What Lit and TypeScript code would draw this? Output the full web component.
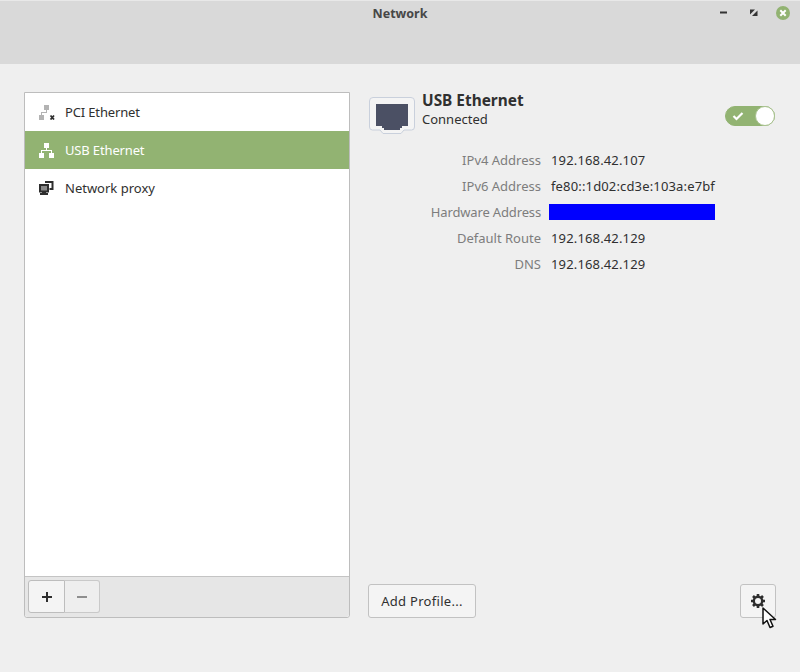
import { LitElement, html, css, svg } from "lit";
import { customElement } from "lit/decorators.js";

const netIcon = (main: string, x = false) => svg`<svg class="ico" width="16" height="16" viewBox="0 0 16 16">
  <rect x="5" y="1" width="5" height="5" fill="${main}"/>
  <rect x="7" y="6" width="1" height="3" fill="${main}"/>
  <rect x="2" y="8" width="${x ? 6 : 11}" height="1" fill="${main}"/>
  <rect x="2" y="8" width="1" height="3" fill="${main}"/>
  ${x ? "" : svg`<rect x="12" y="8" width="1" height="3" fill="${main}"/>`}
  <rect x="0" y="11" width="5" height="5" fill="${main}"/>
  ${x
    ? svg`<path d="M11.500 11.500l3.500 4M15 11.500l-3.500 4" stroke="#2e2e2e" stroke-width="1.800" fill="none"/>`
    : svg`<rect x="10" y="11" width="5" height="5" fill="${main}"/>`}
</svg>`;

@customElement("app-root")
export class AppRoot extends LitElement {
  static styles = css`
    :host { display: block; position: relative; width: 800px; height: 672px; overflow: hidden;
      background: #efefef; font-family: "Noto Sans", sans-serif; font-size: 13px; color: #303030; }
    .titlebar { height: 64px; box-sizing: border-box; background: #d9d9d9; border-top: 1px solid #e8e8e8;
      position: relative; display: flex; justify-content: center; padding-top: 5px; }
    .title { font-weight: 700; font-size: 12.500px; color: #474747; line-height: 16px; }
    .controls { position: absolute; left: 0; top: 0; width: 100%; height: 24px; }
    .controls svg { position: absolute; top: 0; }
    .c-min { left: 718px; }
    .c-max { left: 748px; }
    .c-close { left: 775px; }
    .body { height: 608px; box-sizing: border-box; padding: 28px 24px 54px; display: flex; gap: 18px; }
    .side { width: 326px; flex: none; box-sizing: border-box; border: 1px solid #bdbdbd; border-radius: 0 0 3px 3px;
      display: flex; flex-direction: column; background: #fff; }
    .list { flex: 1; }
    .row { height: 38px; display: flex; align-items: center; padding-left: 14px; gap: 10px; }
    .row.sel { background: #92b372; color: #fff; }
    .ico { flex: none; display: block; }
    .tight { letter-spacing: -0.15px; }
    .tools { height: 41px; box-sizing: border-box; border-top: 1px solid #c4c4c4; background: #e6e6e6;
      padding: 3px 3px 5px; display: flex; border-radius: 0 0 3px 3px; }
    .tb { height: 33px; box-sizing: border-box; border: 1px solid #c9c9c9; display: flex;
      align-items: center; justify-content: center; background: #f4f4f4; }
    .tb.a { width: 37px; border-radius: 3px 0 0 3px; border-color: #bdbdbd; }
    .tb.b { width: 35px; border-radius: 0 3px 3px 0; border-left: 0; background: #eeeeee; }
    .main { flex: 1; display: flex; flex-direction: column; min-width: 0; }
    .head { display: flex; height: 50px; align-items: flex-start; padding-left: 1px; }
    .hicon { margin-top: 5px; flex: none; }
    .htext { margin-left: 7px; }
    .h1 { font-weight: 700; font-size: 15.400px; line-height: 18px; color: #303030; }
    .h2 { font-size: 13px; line-height: 18px; }
    .switch { margin: 14px 1px 0 auto; width: 50px; height: 20px; box-sizing: border-box; border-radius: 10px;
      background: #92b372; border: 1px solid #92b372; position: relative; flex: none; display: flex; align-items: center; padding-left: 6px; }
    .knob { position: absolute; right: -1px; top: -1px; width: 20px; height: 20px; border-radius: 50%;
      background: #fff; box-sizing: border-box; border: 1px solid #a9c290; }
    .grid { display: grid; grid-template-columns: 173px auto; grid-auto-rows: 26px; align-items: center;
      column-gap: 10px; margin-top: 5px; justify-content: start; }
    .k { text-align: right; color: #7d7d7d; }
    .v { color: #303030; letter-spacing: 0.15px; }
    .redact { width: 166px; height: 16px; background: #0000ff; margin-left: -2px; }
    .foot { margin-top: auto; display: flex; justify-content: space-between; }
    .btn { height: 34px; box-sizing: border-box; border: 1px solid #c2c2c2; border-radius: 3px; background: #f4f4f4;
      display: flex; align-items: center; justify-content: center; color: #303030; font-family: inherit; font-size: 13px; padding: 0; }
    .add { width: 108px; letter-spacing: 0.3px; }
    .gear { width: 36px; }
    .cursor { position: absolute; left: 762px; top: 607px; }
  `;

  render() {
    return html`
      <div class="titlebar">
        <div class="title">Network</div>
        <div class="controls">
          <svg class="c-min" width="12" height="24" viewBox="0 0 12 24"><rect x="2" y="10.500" width="7" height="2" fill="#333"/></svg>
          <svg class="c-max" width="12" height="24" viewBox="0 0 12 24"><path d="M2 8.500h5l-5 5z" fill="#333"/><path d="M9.500 9.500v5.500h-5.500z" fill="#333"/></svg>
          <svg class="c-close" width="16" height="24" viewBox="0 0 16 24"><circle cx="8" cy="12" r="7" fill="#92b372"/><path d="M5.300 9.300l5.400 5.400M10.700 9.300l-5.400 5.400" stroke="#fff" stroke-width="2"/></svg>
        </div>
      </div>
      <div class="body">
        <div class="side">
          <div class="list">
            <div class="row">${netIcon("#b3b3b3", true)}<span class="tight">PCI Ethernet</span></div>
            <div class="row sel">${netIcon("#ffffff")}<span class="tight">USB Ethernet</span></div>
            <div class="row">
              <svg class="ico" width="16" height="16" viewBox="0 0 16 16">
                <path d="M6 2h7.500v7h-3" fill="none" stroke="#2e2e2e" stroke-width="2"/>
                <path d="M0 4h10v8.500H0z" fill="#2e2e2e"/>
                <rect x="2" y="6" width="6" height="4.500" fill="#8a8a8a"/>
                <rect x="3" y="12" width="4" height="1" fill="#2e2e2e"/>
                <rect x="1" y="13" width="8" height="2" fill="#2e2e2e"/>
              </svg>
              <span>Network proxy</span>
            </div>
          </div>
          <div class="tools">
            <div class="tb a"><svg width="12" height="12" viewBox="0 0 12 12"><path d="M6 1v10M1 6h10" stroke="#2e2e2e" stroke-width="2"/></svg></div>
            <div class="tb b"><svg width="12" height="12" viewBox="0 0 12 12"><path d="M1 6h10" stroke="#8e8e8e" stroke-width="2"/></svg></div>
          </div>
        </div>
        <div class="main">
          <div class="head">
            <svg class="hicon" width="46" height="40" viewBox="0 0 46 40">
              <path d="M4 .500h38a3.500 3.500 0 0 1 3.500 3.500v26a3 3 0 0 1-3 3H35l-3 3.500H14L11 33H3.500a3 3 0 0 1-3-3V4A3.500 3.500 0 0 1 4 .500z" fill="#f4f4f4" stroke="#c9d0dc"/>
              <path d="M7 7h32v22h-6v2h-2v2H15v-2h-2v-2H7z" fill="#4b5064"/>
            </svg>
            <div class="htext">
              <div class="h1">USB Ethernet</div>
              <div class="h2">Connected</div>
            </div>
            <div class="switch">
              <svg width="12" height="10" viewBox="0 0 12 10"><path d="M1.500 5l3 3L10.500 2" fill="none" stroke="#fff" stroke-width="2.200"/></svg>
              <div class="knob"></div>
            </div>
          </div>
          <div class="grid">
            <div class="k">IPv4 Address</div><div class="v">192.168.42.107</div>
            <div class="k">IPv6 Address</div><div class="v">fe80::1d02:cd3e:103a:e7bf</div>
            <div class="k tight">Hardware Address</div><div class="redact"></div>
            <div class="k">Default Route</div><div class="v">192.168.42.129</div>
            <div class="k">DNS</div><div class="v">192.168.42.129</div>
          </div>
          <div class="foot">
            <button class="btn add">Add Profile...</button>
            <button class="btn gear">
              <svg width="16" height="16" viewBox="0 0 16 16">
                <g stroke="#2e2e2e" stroke-width="2.600">
                  <path d="M8 1v14M1 8h14M3 3l10 10M13 3L3 13"/>
                </g>
                <circle cx="8" cy="8" r="4.200" fill="#f4f4f4" stroke="#2e2e2e" stroke-width="2.400"/>
              </svg>
            </button>
          </div>
        </div>
      </div>
      <svg class="cursor" width="16" height="22" viewBox="0 0 16 22">
        <path d="M1 1v16l4-3.500 3 7 3-1.300-3-6.700h5.500z" fill="#fff" stroke="#111" stroke-width="1.500" stroke-linejoin="round"/>
      </svg>
    `;
  }
}
